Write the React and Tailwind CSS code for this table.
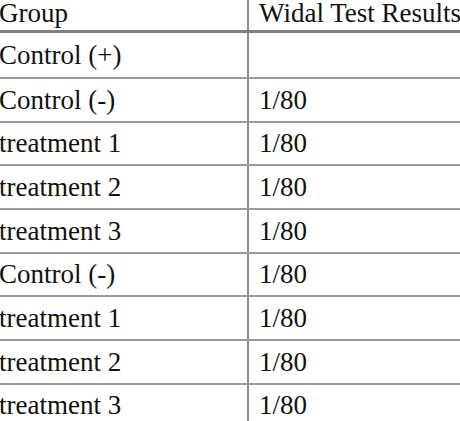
import React from 'react'

const rows = [
    ['Control (+)', ''],
    ['Control (-)', '1/80'],
    ['treatment 1', '1/80'],
    ['treatment 2', '1/80'],
    ['treatment 3', '1/80'],
    ['Control (-)', '1/80'],
    ['treatment 1', '1/80'],
    ['treatment 2', '1/80'],
    ['treatment 3', '1/80'],
]

const App = () => {
    return (
        <div
            className="w-[460px] h-[421px] overflow-hidden bg-white text-[#111] text-[27px]"
            style={{ fontFamily: '"Liberation Serif", "Times New Roman", serif' }}
        >
            <div className="flex h-[33px] border-b-[3px] border-[#808080] leading-none">
                <div className="w-[250px] shrink-0 border-r-2 border-[#8c8c8c] -ml-px whitespace-nowrap">
                    Group
                </div>
                <div className="pl-[10px] whitespace-nowrap">Widal Test Results</div>
            </div>
            {rows.map(([group, result], i) => (
                <div
                    key={i}
                    className={
                        'flex items-center ' +
                        (i === 0 ? 'h-[44px]' : 'h-[43.7px] border-t-2 border-[#9a9a9a]')
                    }
                >
                    <div className="w-[250px] h-full shrink-0 flex items-center border-r-2 border-[#8c8c8c] -ml-px whitespace-nowrap">
                        {group}
                    </div>
                    <div className="pl-[10px] whitespace-nowrap">{result}</div>
                </div>
            ))}
        </div>
    )
}

export default App
